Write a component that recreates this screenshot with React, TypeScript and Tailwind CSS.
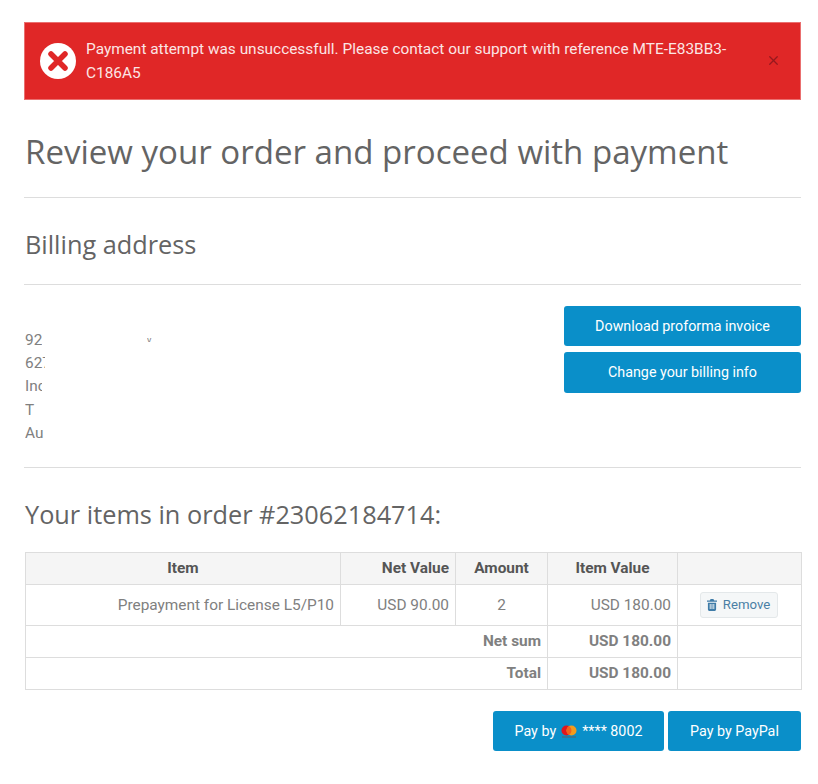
import { X } from 'lucide-react';

const roboto = "font-['Roboto',sans-serif]";
const heading = "font-['Open_Sans',sans-serif] text-[#646464]";

function PrimaryButton({ children, className }: { children: React.ReactNode; className: string }) {
  return (
    <button className={`flex items-center justify-center rounded-[3px] bg-[#0a8fc9] pt-px text-[14.3px] text-white ${className}`}>
      {children}
    </button>
  );
}

function MasterCard() {
  return (
    <svg width="16" height="13" viewBox="0 0 16 13" className="mx-[5px]">
      <circle cx="5.5" cy="5.5" r="5" fill="#e0161e" />
      <circle cx="10.5" cy="5.5" r="5" fill="#f49b1c" />
      <path d="M8 1.2a5 5 0 0 1 0 8.6a5 5 0 0 1 0-8.6z" fill="#f2611c" />
      <rect x="1" y="11.5" width="14" height="1" fill="#56606b" />
    </svg>
  );
}

function TrashIcon() {
  return (
    <svg width="10" height="12" viewBox="0 0 11 13" className="text-[#3f7ca8]">
      <path
        fill="currentColor"
        fillRule="evenodd"
        d="M4 0h3l1 1.5h3V3H0V1.5h3zM1 4h9v7.5a1.5 1.5 0 0 1-1.5 1.5h-6A1.5 1.5 0 0 1 1 11.5zM3 5.5V11h1V5.5zM5 5.5V11h1V5.5zM7 5.5V11h1V5.5z"
      />
    </svg>
  );
}

const th = 'border border-[#dddddd] bg-[#f5f5f5] font-bold text-[#555555]';
const td = 'border border-[#dddddd] px-[6px] text-right';

export default function App() {
  return (
    <div className={`h-[784px] w-[818px] overflow-hidden bg-white pl-[24px] pr-[17px] pt-[22px] ${roboto}`}>
      <div className="flex h-[78px] items-center border border-[#ea6f6f] bg-[#e02727] pl-[15px] pr-[19px] text-[15.42px] leading-[24px] text-[#fbe5e5]">
        <svg width="36" height="36" viewBox="0 0 36 36" className="shrink-0">
          <circle cx="18" cy="18" r="18" fill="#ffffff" />
          <path d="M11 11L25 25M25 11L11 25" stroke="#e02727" strokeWidth="5.5" strokeLinecap="round" />
        </svg>
        <p className="ml-[10px] w-[650px]">
          Payment attempt was unsuccessfull. Please contact our support with reference MTE-E83BB3-C186A5
        </p>
        <X className="mb-[2px] ml-auto text-[#96181e]" size={15} strokeWidth={2} />
      </div>

      <h1 className={`mt-[26px] pl-px text-[33.05px] leading-[52px] ${heading}`}>Review your order and proceed with payment</h1>
      <hr className="mt-[19px] border-[#dddddd]" />

      <h2 className={`mt-[28px] pl-px text-[25.3px] leading-[36px] ${heading}`}>Billing address</h2>
      <hr className="mt-[22px] border-[#dddddd]" />

      <div className="mt-[21px] flex items-start justify-between">
        <div className="mt-[23px] pl-px text-[15.4px] leading-[23.3px] text-[#808080]">
          <div className="flex h-[23px]">
            <span className="w-[17px] overflow-hidden">92</span>
            <span className="ml-[105px] h-[13px] w-[5px] overflow-hidden text-[9px]">v</span>
          </div>
          <div className="w-[20px] overflow-hidden">627</div>
          <div className="w-[17px] overflow-hidden">Inc</div>
          <div className="w-[10px] overflow-hidden">T</div>
          <div className="w-[20px] overflow-hidden">Au</div>
        </div>
        <div className="flex w-[237px] flex-col gap-[6px]">
          <PrimaryButton className="h-[40px] w-full">Download proforma invoice</PrimaryButton>
          <PrimaryButton className="h-[41px] w-full">Change your billing info</PrimaryButton>
        </div>
      </div>
      <hr className="mt-[22px] border-[#dddddd]" />

      <h2 className={`mt-[28px] pl-px text-[25.3px] leading-[36px] ${heading}`}>Your items in order #23062184714:</h2>

      <table className="ml-px mt-[20px] w-[776px] table-fixed border-collapse text-[15.4px] text-[#808080]">
        <colgroup>
          <col className="w-[315px]" />
          <col className="w-[115px]" />
          <col className="w-[92px]" />
          <col className="w-[130px]" />
          <col className="w-[124px]" />
        </colgroup>
        <thead>
          <tr className="h-[32px]">
            <th className={`${th} text-center`}>Item</th>
            <th className={`${th} px-[6px] text-right`}>Net Value</th>
            <th className={`${th} text-center`}>Amount</th>
            <th className={`${th} text-center`}>Item Value</th>
            <th className={th}></th>
          </tr>
        </thead>
        <tbody>
          <tr className="h-[41px]">
            <td className={td}>Prepayment for License L5/P10</td>
            <td className={td}>USD 90.00</td>
            <td className="border border-[#dddddd] text-center">2</td>
            <td className={td}>USD 180.00</td>
            <td className="border border-[#dddddd]">
              <button className="mx-auto flex h-[26px] w-[78px] -translate-x-px items-center justify-center gap-[6px] rounded-[3px] border border-[#e4e8ea] bg-[#f5f7f8] text-[13.2px] text-[#4a7fa5]">
                <TrashIcon />
                Remove
              </button>
            </td>
          </tr>
          <tr className="h-[32px]">
            <td colSpan={3} className={`${td} font-bold`}>Net sum</td>
            <td className={`${td} font-bold`}>USD 180.00</td>
            <td className="border border-[#dddddd]"></td>
          </tr>
          <tr className="h-[32px]">
            <td colSpan={3} className={`${td} font-bold`}>Total</td>
            <td className={`${td} font-bold`}>USD 180.00</td>
            <td className="border border-[#dddddd]"></td>
          </tr>
        </tbody>
      </table>

      <div className="mt-[21px] flex justify-end gap-[4px]">
        <PrimaryButton className="h-[40px] w-[171px]">
          Pay by <MasterCard /> **** 8002
        </PrimaryButton>
        <PrimaryButton className="h-[40px] w-[133px]">Pay by PayPal</PrimaryButton>
      </div>
    </div>
  );
}
